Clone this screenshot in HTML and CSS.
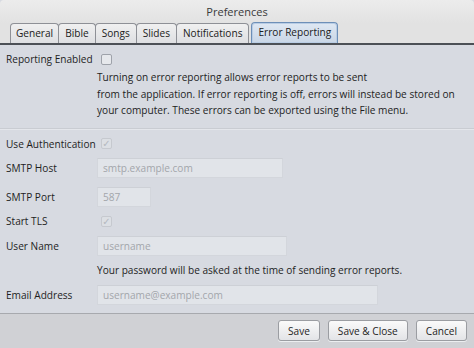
FILE: index.html
```html
<!DOCTYPE html>
<html>
<head>
<meta charset="utf-8">
<link rel="stylesheet" href="styles.css">
</head>
<body>
<div class="window">
  <div class="titlebar">Preferences</div>
  <div class="tabbar">
    <div class="tab">General</div>
    <div class="tab">Bible</div>
    <div class="tab">Songs</div>
    <div class="tab">Slides</div>
    <div class="tab">Notifications</div>
    <div class="tab active">Error Reporting</div>
  </div>
  <div class="content">
    <div class="row first">
      <span class="label">Reporting Enabled</span>
      <span class="check"></span>
    </div>
    <p class="desc">Turning on error reporting allows error reports to be sent<br>from the application. If error reporting is off, errors will instead be stored on<br>your computer. These errors can be exported using the File menu.</p>
    <div class="sep"></div>
    <div class="form">
      <div class="row"><span class="label">Use Authentication</span><span class="check checked">&#10003;</span></div>
      <div class="row"><span class="label">SMTP Host</span><span class="input host">smtp.example.com</span></div>
      <div class="row port"><span class="label">SMTP Port</span><span class="input portbox">587</span></div>
      <div class="row"><span class="label">Start TLS</span><span class="check checked">&#10003;</span></div>
      <div class="row"><span class="label">User Name</span><span class="input user">username</span></div>
      <div class="row"><span class="label"></span><span class="note">Your password will be asked at the time of sending error reports.</span></div>
      <div class="row"><span class="label">Email Address</span><span class="input email">username@example.com</span></div>
    </div>
  </div>
  <div class="buttons">
    <button class="btn">Save</button>
    <button class="btn">Save &amp; Close</button>
    <button class="btn">Cancel</button>
  </div>
</div>
</body>
</html>
```
FILE: styles.css
```css
* { box-sizing: border-box; }
html, body { margin: 0; padding: 0; }
body {
  font-family: "Open Sans", "DejaVu Sans", sans-serif;
  font-size: 10.1px;
  color: #1e1e1e;
  width: 474px;
  height: 348px;
  overflow: hidden;
  background: #d7dae1;
}
.window {
  width: 474px;
  height: 348px;
  display: flex;
  flex-direction: column;
}
.titlebar {
  height: 23px;
  line-height: 24px;
  text-align: center;
  font-size: 11px;
  color: #3a3a3a;
  background: linear-gradient(#ececec, #e2e2e2);
  border-radius: 4px 4px 0 0;
}
.tabbar {
  height: 22px;
  display: flex;
  align-items: flex-end;
  padding-left: 10px;
  background: #e2e2e2;
  border-bottom: 2px solid #4c5056;
}
.tab {
  height: 20px;
  line-height: 18px;
  padding: 0 6px;
  border: 1px solid #8e9096;
  border-bottom: none;
  border-radius: 4px 4px 0 0;
  background: linear-gradient(#f0f0f0, #dedfe2);
  color: #202020;
  margin-right: -1px;
}
.tab:first-child { padding: 0 5px; }
.tab.active {
  margin-left: 3px;
  padding: 0 6px;
  height: 21px;
  background: linear-gradient(#dfe8f3, #c9d6e6);
  border-color: #6d8fb8;
  box-shadow: inset 0 0 0 1px #b9cde4;
}
.content {
  flex: 1;
  background: #d7dae1;
  padding: 4px 0 0 6px;
  border-bottom: 1px solid #a7a9ae;
}
.row {
  display: flex;
  align-items: center;
  height: 20px;
}
.label {
  width: 91px;
  flex: none;
  white-space: nowrap;
}
.check {
  width: 11px;
  height: 11px;
  margin-left: 4px;
  border: 1px solid #9ea2aa;
  border-radius: 2px;
  background: #e6e8ec;
  font-size: 10px;
  line-height: 9px;
  text-align: center;
  color: #b4b8c0;
}
.first .check { margin-left: 4px; }
.check.checked {
  border-color: #c6c9cf;
  background: #dcdfe4;
}
.desc {
  margin: 0 0 0 91px;
  line-height: 16.5px;
  white-space: nowrap;
}
.sep {
  margin: 9px 0 4px -6px;
  background: #e4e6eb;
  border-top: 1px solid #c9ccd2;
  height: 2px;
}
.form {
  display: flex;
  flex-direction: column;
  gap: 4.5px;
}
.row.port { margin-top: 4px; }
.input {
  height: 20px;
  line-height: 19px;
  padding-left: 5px;
  background: #e1e4e9;
  border: 1px solid #d3d6dc;
  border-top-color: #cdd0d6;
  color: #a3a6ab;
  white-space: nowrap;
}
.host { width: 186px; }
.portbox { width: 54px; }
.user { width: 190px; }
.email { width: 281px; }
.note { white-space: nowrap; }
.buttons {
  height: 34px;
  background: #d0d1d5;
  display: flex;
  justify-content: flex-end;
  align-items: flex-start;
  padding: 6px 7px 0 0;
  gap: 8px;
}
.btn {
  font-family: "Open Sans", "DejaVu Sans", sans-serif;
  font-size: 10.1px;
  color: #1e1e1e;
  height: 21px;
  padding: 0 9px;
  border: 1px solid #9b9da2;
  border-radius: 3px;
  background: linear-gradient(#fafafa, #e3e4e7);
  box-shadow: 0 1px 0 #eceef0;
}
```
